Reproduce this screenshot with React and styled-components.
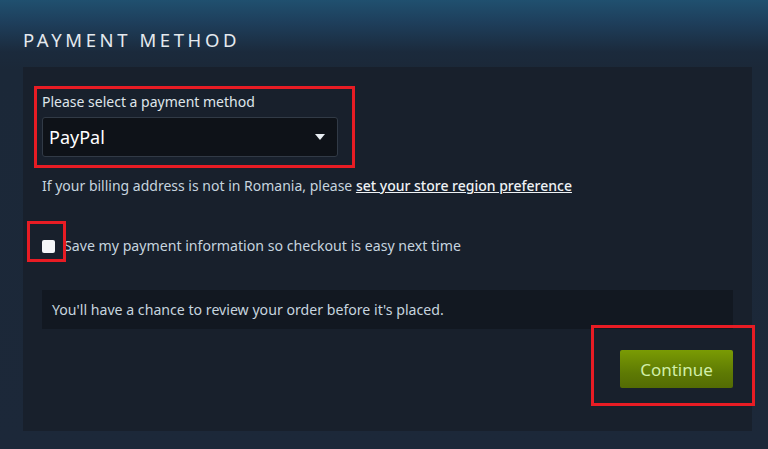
import styled, { createGlobalStyle } from "styled-components";

const GlobalStyle = createGlobalStyle`
    html, body {
        margin: 0;
        padding: 0;
    }
    body {
        background: linear-gradient(180deg, #20506f 0%, #1e3f5c 22px, #1b2a3c 52px, #1b2838 70px, #1c2839 100%);
        min-height: 449px;
        font-family: "Noto Sans", "Open Sans", Arial, sans-serif;
        color: #c6d4df;
    }
`;

export default function App() {
    return (
        <>
            <GlobalStyle />
            <Page>
                <Title>PAYMENT METHOD</Title>
                <Panel>
                    <SelectGroup>
                        <Annotation $top={-7} $left={-8} $width={321} $height={82} />
                        <Label>Please select a payment method</Label>
                        <Select>
                            <span>PayPal</span>
                            <svg width="10" height="6" viewBox="0 0 10 6">
                                <path d="M0 0 L10 0 L5 6 Z" fill="#e8edf2" />
                            </svg>
                        </Select>
                    </SelectGroup>
                    <RegionNote>
                        If your billing address is not in Romania, please{" "}
                        <a href="#region">set your store region preference</a>
                    </RegionNote>
                    <CheckRow>
                        <Annotation $top={-16} $left={-15} $width={39} $height={41} />
                        <Box type="checkbox" />
                        <span>Save my payment information so checkout is easy next time</span>
                    </CheckRow>
                    <ReviewBox>You'll have a chance to review your order before it's placed.</ReviewBox>
                    <Actions>
                        <ButtonWrap>
                            <Annotation $top={-25} $left={-29} $width={164} $height={81} />
                            <ContinueButton>Continue</ContinueButton>
                        </ButtonWrap>
                    </Actions>
                </Panel>
            </Page>
        </>
    );
}

const Page = styled.div`
    padding: 29px 16px 18px 23px;
`;

const Title = styled.h2`
    margin: 0 0 17px;
    font-size: 18.5px;
    line-height: 21px;
    font-weight: 400;
    letter-spacing: 3.6px;
    color: #e4e9ee;
`;

const Panel = styled.div`
    background: #18202c;
    padding: 26px 19px 43px;
    box-sizing: border-box;
    width: 729px;
    height: 364px;
`;

const Annotation = styled.div`
    position: absolute;
    top: ${p => p.$top}px;
    left: ${p => p.$left}px;
    width: ${p => p.$width}px;
    height: ${p => p.$height}px;
    border: 3px solid #e81c24;
    box-sizing: border-box;
    pointer-events: none;
`;

const SelectGroup = styled.div`
    position: relative;
    width: 296px;
`;

const Label = styled.div`
    font-size: 14px;
    line-height: 17px;
    color: #dfe5ea;
    margin-bottom: 7px;
`;

const Select = styled.div`
    height: 40px;
    box-sizing: border-box;
    background: #0e1218;
    border: 1px solid #313a46;
    border-radius: 3px;
    display: flex;
    align-items: center;
    justify-content: space-between;
    padding: 0 12px 0 6px;
    span {
        font-size: 18px;
        color: #ffffff;
    }
`;

const RegionNote = styled.div`
    margin-top: 20px;
    font-size: 14px;
    line-height: 18px;
    color: #c6d4df;
    a {
        color: #eef2f5;
        text-decoration: underline;
        font-weight: 500;
    }
`;

const CheckRow = styled.label`
    position: relative;
    display: flex;
    align-items: center;
    gap: 9px;
    margin-top: 42px;
    font-size: 14.15px;
    line-height: 18px;
    color: #c6d4df;
`;

const Box = styled.input`
    appearance: none;
    margin: 0;
    width: 13px;
    height: 13px;
    border-radius: 2px;
    background: #f4f6f8;
    border: none;
`;

const ReviewBox = styled.div`
    margin-top: 35px;
    height: 39px;
    box-sizing: border-box;
    background: #121821;
    padding: 0 10px;
    display: flex;
    align-items: center;
    font-size: 14.15px;
    color: #c6d4df;
`;

const Actions = styled.div`
    display: flex;
    justify-content: flex-end;
    margin-top: 21px;
`;

const ButtonWrap = styled.div`
    position: relative;
`;

const ContinueButton = styled.button`
    width: 113px;
    height: 38px;
    border: none;
    border-radius: 2px;
    background: linear-gradient(180deg, #7a9b04 0%, #5e7a04 60%, #536b04 100%);
    color: #d2efa9;
    font-family: "Noto Sans", "Open Sans", Arial, sans-serif;
    font-size: 17px;
    cursor: pointer;
`;
